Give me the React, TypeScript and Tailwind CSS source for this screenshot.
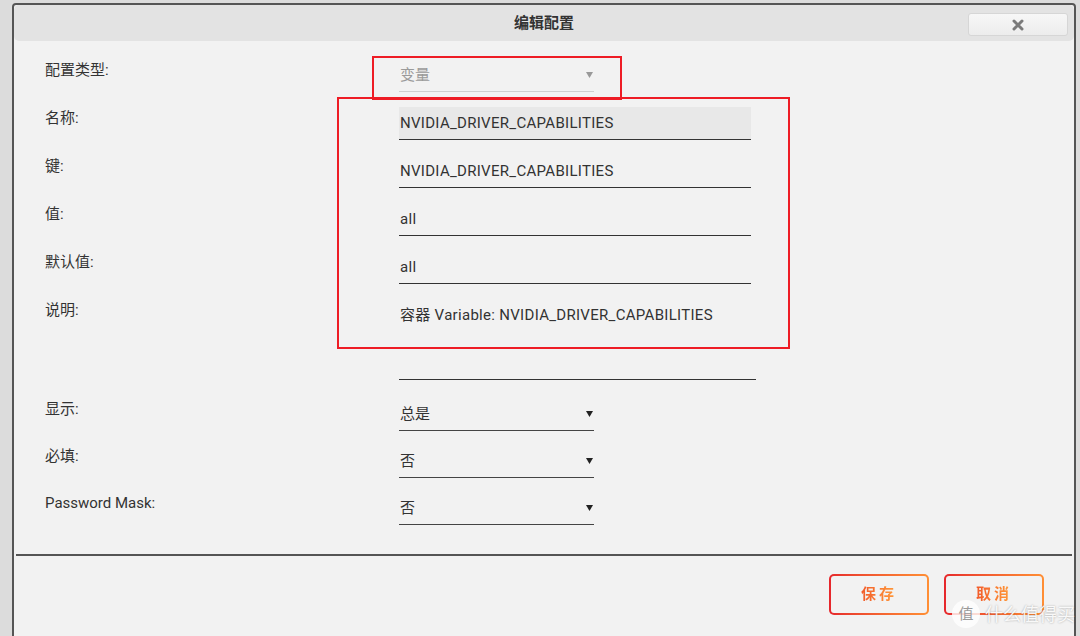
import React from "react";

const font = { fontFamily: 'Roboto, "Noto Sans CJK SC", sans-serif' };

function Label({ children }: { children: React.ReactNode }) {
  return <div className="w-[354px] shrink-0 pt-[3px] leading-[16px] text-[15px] text-[#333]">{children}</div>;
}

function TextRow({ label, value, filled }: { label: string; value: string; filled?: boolean }) {
  return (
    <div className="flex">
      <Label>{label}</Label>
      <div
        className={`w-[352px] h-[33px] flex items-center border-b border-[#333] text-[15px] tracking-[0.3px] text-[#333] ${filled ? "bg-[#e8e8e8]" : ""}`}
      >
        <span className="pl-px">{value}</span>
      </div>
    </div>
  );
}

function Caret({ light }: { light?: boolean }) {
  return (
    <svg width="7" height="8" viewBox="0 0 7 8" className={light ? "text-[#999]" : "text-[#222]"}>
      <path d="M0 1 L7 1 L3.5 7 Z" fill="currentColor" />
    </svg>
  );
}

function SelectRow({ label, value, light }: { label: string; value: string; light?: boolean }) {
  return (
    <div className="flex">
      <Label>{label}</Label>
      <div
        className={`w-[195px] h-[33px] flex items-center justify-between pr-[1px] border-b text-[15px] ${
          light ? "border-[#cfcfcf] text-[#9a9a9a]" : "border-[#444] text-[#333]"
        }`}
      >
        <span className="pl-px">{value}</span>
        <Caret light={light} />
      </div>
    </div>
  );
}

function GradientButton({ children }: { children: React.ReactNode }) {
  return (
    <div className="w-[100px] h-[41px] p-[2px] rounded-[5px] bg-gradient-to-r from-[#e6262c] to-[#ff8f35]">
      <div className="w-full h-full rounded-[3px] bg-[#f2f2f2] flex items-center justify-center">
        <span className="text-[15px] font-bold tracking-[3px] bg-gradient-to-r from-[#f25a2a] to-[#ff9a3a] bg-clip-text text-transparent">
          {children}
        </span>
      </div>
    </div>
  );
}

export default function App() {
  return (
    <div className="w-[1080px] h-[636px] overflow-hidden bg-[#dcdcdc] pl-[12px] pr-[4px] pt-[3px]" style={font}>
      <div className="relative h-[660px] bg-[#f2f2f2] border-2 border-[#555] rounded-t-[4px] flex flex-col">
        {/* header */}
        <div className="relative h-[36px] bg-[#e3e3e3] rounded-[5px] flex items-center justify-center">
          <span className="text-[15px] font-bold text-[#333]">编辑配置</span>
          <div className="absolute right-[6px] top-[8px] w-[100px] h-[23px] rounded-[3px] border border-[#d6d6d6] bg-gradient-to-b from-[#f7f7f7] to-[#ececec] flex items-center justify-center">
            <svg width="12" height="12" viewBox="0 0 12 12">
              <path d="M2 2 L10 10 M10 2 L2 10" stroke="#7a7a7a" strokeWidth="3" strokeLinecap="round" />
            </svg>
          </div>
        </div>

        {/* form */}
        <div className="pl-[31px] pt-[18px] flex flex-col">
          <SelectRow label="配置类型:" value="变量" light />
          <div className="mt-[15px] flex flex-col gap-[15px]">
            <TextRow label="名称:" value="NVIDIA_DRIVER_CAPABILITIES" filled />
            <TextRow label="键:" value="NVIDIA_DRIVER_CAPABILITIES" />
            <TextRow label="值:" value="all" />
            <TextRow label="默认值:" value="all" />
            <div className="flex">
              <Label>说明:</Label>
              <div className="flex flex-col">
                <div className="h-[33px] flex items-center text-[15px] tracking-[0.3px] text-[#333] pl-px">
                  容器 Variable: NVIDIA_DRIVER_CAPABILITIES
                </div>
                <div className="w-[357px] h-[48px] border-b border-[#333]" />
              </div>
            </div>
          </div>
          <div className="mt-[18px] flex flex-col gap-[14px]">
            <SelectRow label="显示:" value="总是" />
            <SelectRow label="必填:" value="否" />
            <SelectRow label="Password Mask:" value="否" />
          </div>
        </div>

        {/* footer */}
        <div className="mt-[29px] mx-[2px] border-t-2 border-[#555]" />
        <div className="flex justify-end gap-[15px] pr-[30px] pt-[18px]">
          <GradientButton>保存</GradientButton>
          <GradientButton>取消</GradientButton>
        </div>

        {/* annotation boxes */}
        <div className="absolute left-[358px] top-[51px] w-[250px] h-[44px] border-2 border-[#ee1c25] pointer-events-none" />
        <div className="absolute left-[323px] top-[92px] w-[453px] h-[252px] border-2 border-[#ee1c25] pointer-events-none" />

        {/* watermark */}
        <div className="absolute left-[938px] top-[595px] flex items-center gap-[5px] whitespace-nowrap pointer-events-none">
          <div className="w-[28px] h-[28px] shrink-0 rounded-full bg-white/80 flex items-center justify-center text-[15px] text-[#9a9a9a]">
            值
          </div>
          <span className="text-[18px] text-white/90 [text-shadow:0_0_2px_rgba(0,0,0,0.35)]">什么值得买</span>
        </div>
      </div>
    </div>
  );
}
